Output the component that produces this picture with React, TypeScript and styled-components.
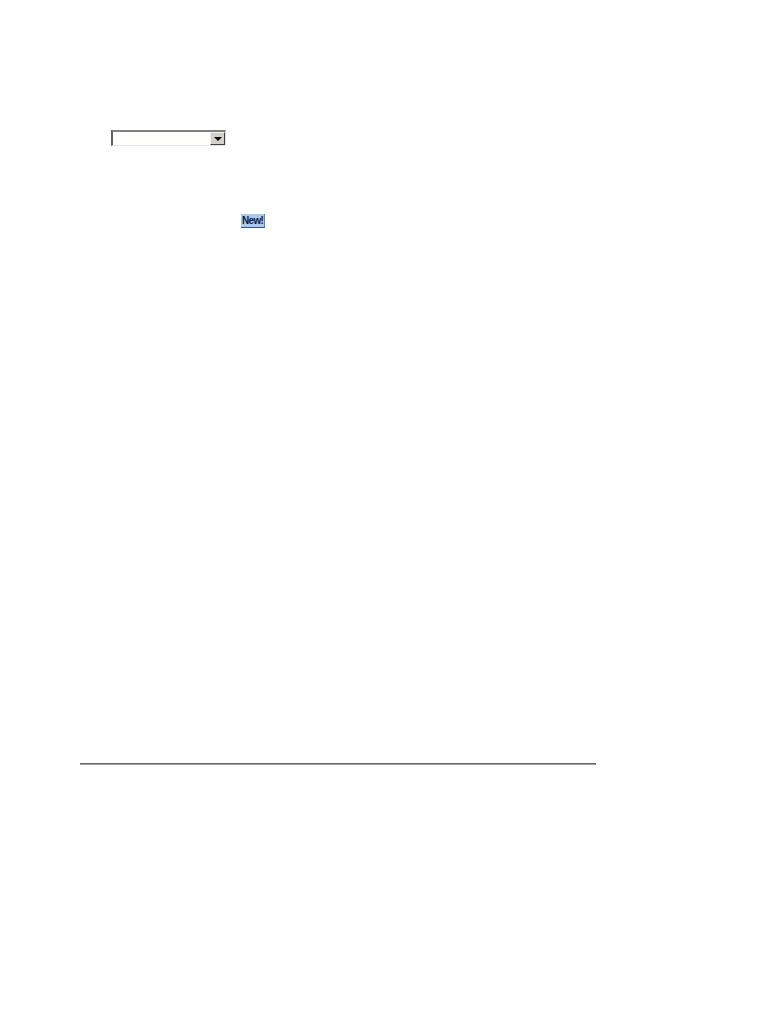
import { FC } from 'react'
import styled, { createGlobalStyle } from 'styled-components'

const Global = createGlobalStyle`
  html, body {
    margin: 0;
    padding: 0;
    background: #ffffff;
    font-family: 'Liberation Sans', Arial, sans-serif;
  }
`

const Page = styled.div`
  width: 768px;
  height: 1024px;
  display: flex;
  flex-direction: column;
`

const SelectRow = styled.div`
  padding: 130px 0 0 111px;
  display: flex;
`

const Select = styled.div`
  width: 115px;
  height: 16px;
  box-sizing: border-box;
  display: flex;
  border-top: 2px solid #808080;
  border-left: 2px solid #606060;
  border-right: 1px solid #e0e0e0;
  border-bottom: 1px solid #e6e6e6;
  background: #fefefa;
`

const SelectField = styled.div`
  flex: 1;
`

const SelectButton = styled.div`
  width: 15px;
  box-sizing: border-box;
  background: #d4d0c8;
  border-left: 1px solid #f0f0f0;
  border-top: 1px solid #f0f0f0;
  border-right: 1px solid #404040;
  border-bottom: 1px solid #404040;
  display: flex;
  align-items: center;
  justify-content: center;
`

const Arrow = styled.div`
  width: 0;
  height: 0;
  border-left: 4px solid transparent;
  border-right: 4px solid transparent;
  border-top: 4px solid #000;
`

const BadgeRow = styled.div`
  padding: 68px 0 0 241px;
  display: flex;
`

const Badge = styled.span`
  display: inline-block;
  box-sizing: border-box;
  height: 14px;
  padding: 0 1px;
  background: #aac8f0;
  border-bottom: 1px solid #3050a0;
  border-right: 1px solid #6080c0;
  color: #0a1a4a;
  font-family: 'Liberation Sans', Arial, sans-serif;
  font-size: 10px;
  font-weight: bold;
  line-height: 13px;
  letter-spacing: -0.7px;
  white-space: nowrap;
`

const Rule = styled.hr`
  margin: 535px 0 0 80px;
  width: 516px;
  height: 0;
  border: none;
  border-top: 1px solid #6a6a6a;
  border-bottom: 1px solid #9a9a9a;
`

const App: FC = () => {
  return (
    <Page>
      <Global />
      <SelectRow>
        <Select>
          <SelectField />
          <SelectButton>
            <Arrow />
          </SelectButton>
        </Select>
      </SelectRow>
      <BadgeRow>
        <Badge>New!</Badge>
      </BadgeRow>
      <Rule />
    </Page>
  )
}

export default App
